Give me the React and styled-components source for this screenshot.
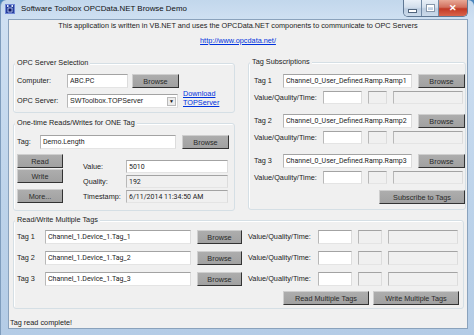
import React from 'react';
import styled, { createGlobalStyle } from 'styled-components';

const GlobalStyle = createGlobalStyle`
  html, body { margin: 0; padding: 0; }
  body {
    width: 474px;
    height: 335px;
    overflow: hidden;
    background: #4a86bd;
    font-family: "Liberation Sans", Arial, sans-serif;
    font-size: 7.3px;
    color: #1c1c1c;
  }
  * { box-sizing: border-box; }
`;

const Frame = styled.div`
  width: 474px;
  height: 335px;
  display: flex;
  flex-direction: column;
  padding: 0 6px 6px 7px;
  background: linear-gradient(180deg, #c2d7ec 0%, #cfe0f2 6%, #bdd3ea 60%, #b4cce6 100%);
  border-left: 1px solid #7f9dbd;
  border-radius: 6px 6px 0 0;
`;

const TitleBar = styled.div`
  height: 19px;
  margin: 0 -6px 0 -7px;
  padding-left: 4px;
  display: flex;
  align-items: flex-start;
`;

const TitleIcon = styled.svg`
  width: 10px;
  height: 10px;
  margin-top: 4px;
  flex: none;
`;

const TitleText = styled.span`
  margin: 4px 0 0 6px;
  font-size: 7.9px;
  line-height: 10px;
  color: #111;
  flex: 1;
`;

const CaptionButtons = styled.div`
  display: flex;
  margin-right: 6px;
  border: 1px solid #5f7894;
  border-top: none;
  border-radius: 0 0 5px 5px;
  overflow: hidden;
  height: 17px;
`;

const CaptionButton = styled.div`
  width: ${p => p.$w}px;
  height: 100%;
  display: flex;
  align-items: center;
  justify-content: center;
  color: #fff;
  font-size: 9px;
  font-weight: bold;
  border-left: ${p => (p.$first ? 'none' : '1px solid #7089a5')};
  background: ${p =>
    p.$close
      ? 'linear-gradient(180deg, #e8a896 0%, #d2705e 45%, #c23a26 55%, #d9644b 100%)'
      : 'linear-gradient(180deg, #e9f0f8 0%, #d3dfec 45%, #bccde0 55%, #cbdaea 100%)'};
`;

const MinGlyph = styled.span`
  width: 7px;
  height: 2px;
  margin-top: 5px;
  background: #fff;
  box-shadow: 0 0 0 1px #51657d;
`;

const MaxGlyph = styled.span`
  width: 7px;
  height: 6px;
  border: 1px solid #fff;
  border-top-width: 2px;
  box-shadow: 0 0 0 1px #8797aa;
`;

const Client = styled.div`
  flex: 1;
  display: flex;
  flex-direction: column;
  background: #f0f0f0;
  border: 1px solid #8aa2bc;
`;

const Intro = styled.div`
  margin-top: 1px;
  line-height: 10px;
  text-align: center;
  white-space: nowrap;
`;

const Link = styled.a`
  color: #0033dd;
  text-decoration: underline;
  cursor: pointer;
`;

const LinkLine = styled.div`
  margin-top: 5px;
  line-height: 10px;
  text-align: center;
`;

const Columns = styled.div`
  display: flex;
  align-items: flex-start;
  gap: 13px;
  padding-left: 4px;
  margin-top: 16px;
`;

const Column = styled.div`
  display: flex;
  flex-direction: column;
  width: ${p => p.$w}px;
`;

const GroupBox = styled.div`
  width: ${p => p.$w}px;
  height: ${p => p.$h}px;
  margin-top: ${p => p.$mt || 0}px;
  margin-left: ${p => p.$ml || 0}px;
  display: flex;
  flex-direction: column;
  border: 1px solid #d5dfe5;
  border-radius: 3px;
  box-shadow: inset 1px 1px 0 #fff;
  flex: none;
`;

const Caption = styled.span`
  align-self: flex-start;
  margin: -6px 0 0 1px;
  padding: 0 2px;
  line-height: 10px;
  height: 10px;
  background: #f0f0f0;
  white-space: nowrap;
`;

const Row = styled.div`
  display: flex;
  align-items: center;
  height: ${p => p.$h || 14}px;
  margin-top: ${p => p.$mt || 0}px;
  padding-left: ${p => p.$pl || 0}px;
  padding-right: ${p => p.$pr || 0}px;
  justify-content: ${p => (p.$end ? 'flex-end' : 'flex-start')};
  gap: ${p => p.$gap || 0}px;
`;

const Label = styled.span`
  width: ${p => p.$w}px;
  margin-left: ${p => p.$ml || 0}px;
  flex: none;
  white-space: nowrap;
  line-height: 10px;
`;

const TextBox = styled.input`
  width: ${p => p.$w}px;
  height: 100%;
  flex: none;
  margin: 0 0 0 ${p => p.$ml || 0}px;
  padding: 0 1px 0 2px;
  font-family: Roboto, "Liberation Sans", sans-serif;
  font-size: 7px;
  color: #1c1c1c;
  background: ${p => (p.$ro ? '#f0f0f0' : '#fff')};
  border: 1px solid;
  border-color: #a3a3a3 #dcdcdc #e4e4e4 #b8b8b8;
  outline: none;
`;

const Button = styled.button`
  width: ${p => p.$w}px;
  height: ${p => p.$h || 14}px;
  flex: none;
  margin: ${p => p.$mt || 0}px 0 0 ${p => p.$ml || 0}px;
  padding: 0;
  font: inherit;
  color: #2a2a2a;
  background: linear-gradient(180deg, #adadad 0%, #a1a1a1 100%);
  border: 1px solid;
  border-color: #cfcfcf #333 #333 #cfcfcf;
`;

const ComboBox = styled.div`
  width: ${p => p.$w}px;
  height: 14px;
  flex: none;
  display: flex;
  align-items: center;
  padding: 0 1px 0 2px;
  background: #fff;
  border: 1px solid;
  border-color: #a3a3a3 #dcdcdc #e4e4e4 #b8b8b8;
  font-size: 7.1px;
`;

const ComboText = styled.span`
  flex: 1;
  white-space: nowrap;
`;

const ComboArrow = styled.span`
  width: 9px;
  height: 9px;
  display: flex;
  align-items: center;
  justify-content: center;
  background: #ececec;
  border: 1px solid #b9b9b9;
  font-size: 5px;
  color: #111;
`;

const SideLink = styled(Link)`
  align-self: flex-start;
  margin: -4px 0 0 5px;
  line-height: 8.5px;
`;

const Body = styled.div`
  display: flex;
  margin-top: ${p => p.$mt || 0}px;
  padding-left: 3px;
`;

const ButtonStack = styled.div`
  display: flex;
  flex-direction: column;
`;

const FieldGrid = styled.div`
  display: grid;
  grid-template-columns: 43px 102px;
  grid-auto-rows: 13px;
  row-gap: 2px;
  align-items: center;
  margin: 6px 0 0 20px;
`;

const Block = styled.div`
  display: flex;
  flex-direction: column;
  margin-top: ${p => p.$mt}px;
`;

const Status = styled.div`
  margin-top: 9px;
  padding-left: 1px;
  line-height: 10px;
`;

const subscriptions = [
  'Channel_0_User_Defined.Ramp.Ramp1',
  'Channel_0_User_Defined.Ramp.Ramp2',
  'Channel_0_User_Defined.Ramp.Ramp3',
];

const multiTags = [
  'Channel_1.Device_1.Tag_1',
  'Channel_1.Device_1.Tag_2',
  'Channel_1.Device_1.Tag_3',
];

const SubscriptionBlock = ({ index, tag, mt }) => (
  <Block $mt={mt}>
    <Row $pl={5}>
      <Label $w={29}>Tag {index}</Label>
      <TextBox $w={129} defaultValue={tag} />
      <Button $w={47} $ml={6}>Browse</Button>
    </Row>
    <Row $pl={5} $h={13} $mt={3}>
      <Label $w={69}>Value/Qaulity/Time:</Label>
      <TextBox $w={39} defaultValue="" />
      <TextBox $w={19} $ml={6} $ro defaultValue="" />
      <TextBox $w={70} $ml={6} $ro defaultValue="" />
    </Row>
  </Block>
);

const MultiTagRow = ({ index, tag, mt }) => (
  <Row $pl={3} $mt={mt}>
    <Label $w={28}>Tag {index}</Label>
    <TextBox $w={146} defaultValue={tag} />
    <Button $w={45} $ml={6}>Browse</Button>
    <Label $w={70} $ml={6}>Value/Quality/Time:</Label>
    <TextBox $w={34} defaultValue="" />
    <TextBox $w={24} $ml={6} $ro defaultValue="" />
    <TextBox $w={70} $ml={6} $ro defaultValue="" />
  </Row>
);

const App = () => (
  <Frame>
    <GlobalStyle />
    <TitleBar>
      <TitleIcon viewBox="0 0 10 10">
        <rect x="0" y="0" width="10" height="10" fill="#27409a" />
        <rect x="0.5" y="0.5" width="9" height="9" fill="none" stroke="#6f86d6" strokeWidth="1" />
        <rect x="2" y="1" width="1.5" height="2" fill="#dfe6ff" />
        <rect x="6.5" y="1" width="1.5" height="2" fill="#dfe6ff" />
        <path d="M3 4 h4 v4 h-4 z" fill="#0c1a66" stroke="#c8d4ff" strokeWidth="0.8" />
      </TitleIcon>
      <TitleText>Software Toolbox OPCData.NET Browse Demo</TitleText>
      <CaptionButtons>
        <CaptionButton $w={17} $first><MinGlyph /></CaptionButton>
        <CaptionButton $w={17}><MaxGlyph /></CaptionButton>
        <CaptionButton $w={29} $close>✕</CaptionButton>
      </CaptionButtons>
    </TitleBar>
    <Client>
      <Intro>This application is written in VB.NET and uses the OPCData.NET components to communicate to OPC Servers</Intro>
      <LinkLine><Link>http://www.opcdata.net/</Link></LinkLine>
      <Columns>
        <Column $w={222}>
          <GroupBox $w={222} $h={50} $mt={1}>
            <Caption>OPC Server Selection</Caption>
            <Row $mt={6} $pl={3}>
              <Label $w={50}>Computer:</Label>
              <TextBox $w={61} defaultValue="ABC.PC" />
              <Button $w={47} $ml={4}>Browse</Button>
            </Row>
            <Row $mt={6} $pl={3}>
              <Label $w={50}>OPC Server:</Label>
              <ComboBox $w={111}>
                <ComboText>SWToolbox.TOPServer</ComboText>
                <ComboArrow>▼</ComboArrow>
              </ComboBox>
              <SideLink>Download<br />TOPServer</SideLink>
            </Row>
          </GroupBox>
          <GroupBox $w={222} $h={88} $mt={10}>
            <Caption>One-time Reads/Writes for ONE Tag</Caption>
            <Row $mt={7} $pl={3}>
              <Label $w={23}>Tag:</Label>
              <TextBox $w={136} defaultValue="Demo.Length" />
              <Button $w={47} $ml={6}>Browse</Button>
            </Row>
            <Body $mt={5}>
              <ButtonStack>
                <Button $w={46}>Read</Button>
                <Button $w={46} $mt={1}>Write</Button>
                <Button $w={46} $mt={6}>More...</Button>
              </ButtonStack>
              <FieldGrid>
                <Label $w={43}>Value:</Label>
                <TextBox $w={102} defaultValue="5010" />
                <Label $w={43}>Quality:</Label>
                <TextBox $w={102} $ro defaultValue="192" />
                <Label $w={43}>Timestamp:</Label>
                <TextBox $w={102} $ro defaultValue="6/11/2014 11:34:50 AM" />
              </FieldGrid>
            </Body>
          </GroupBox>
        </Column>
        <GroupBox $w={218} $h={148}>
          <Caption>Tag Subscriptions</Caption>
          {subscriptions.map((tag, i) => (
            <SubscriptionBlock key={tag} index={i + 1} tag={tag} mt={i === 0 ? 7 : 10} />
          ))}
          <Row $mt={6} $end>
            <Button $w={86}>Subscribe to Tags</Button>
          </Row>
        </GroupBox>
      </Columns>
      <GroupBox $w={451} $h={89} $mt={9} $ml={4}>
        <Caption>Read/Write Multiple Tags</Caption>
        {multiTags.map((tag, i) => (
          <MultiTagRow key={tag} index={i + 1} tag={tag} mt={i === 0 ? 5 : 7} />
        ))}
        <Row $mt={5} $end $pr={4} $gap={4}>
          <Button $w={86}>Read Multiple Tags</Button>
          <Button $w={86}>Write Multiple Tags</Button>
        </Row>
      </GroupBox>
      <Status>Tag read complete!</Status>
    </Client>
  </Frame>
);

export default App;
